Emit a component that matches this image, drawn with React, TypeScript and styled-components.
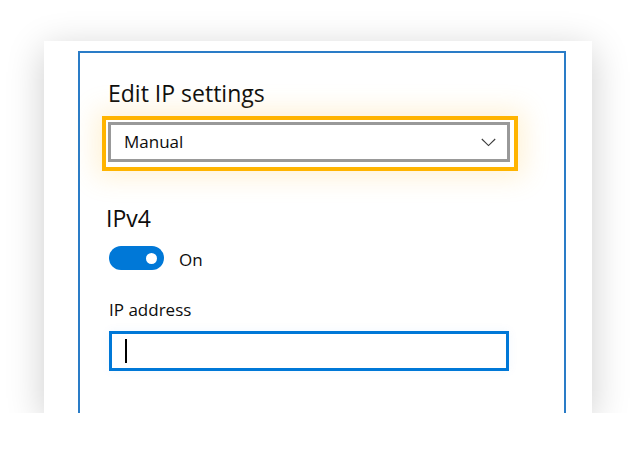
import React from "react";
import styled, { createGlobalStyle } from "styled-components";

const GlobalStyle = createGlobalStyle`
  html, body {
    margin: 0;
    padding: 0;
    background: #ffffff;
  }
  body {
    font-family: "Open Sans", "Noto Sans", "Liberation Sans", sans-serif;
    color: #111;
  }
`;

const Card = styled.div`
  margin: 41px 0 0 44px;
  width: 548px;
  height: 372px;
  background: #ffffff;
  box-shadow: 0 8px 36px rgba(0, 0, 0, 0.2);
  overflow: hidden;
`;

const Frame = styled.div`
  box-sizing: border-box;
  margin: 10px 0 0 34px;
  width: 488px;
  min-height: 420px;
  border: 2px solid #2a7cc7;
  border-bottom: none;
  padding: 25px 0 0 28px;
  display: flex;
  flex-direction: column;
  align-items: flex-start;
`;

const Title = styled.h2<{ $shift?: number }>`
  margin: 0;
  margin-left: ${(p) => p.$shift ?? 0}px;
  font-size: 23px;
  line-height: 30px;
  font-weight: 400;
  color: #0d0d0d;
`;

const Highlight = styled.div`
  box-sizing: border-box;
  margin: 8px 0 0 -6px;
  width: 416px;
  border: 4px solid #ffb400;
  padding: 2px 4px 5px 2px;
  background: #fff;
  box-shadow: 0 0 26px 6px rgba(255, 196, 70, 0.22);
`;

const Select = styled.div`
  box-sizing: border-box;
  height: 40px;
  border: 3px solid #999999;
  display: flex;
  align-items: center;
  justify-content: space-between;
  padding: 0 11px 0 13px;
  font-size: 17px;
  line-height: 20px;
  color: #0d0d0d;
`;

const ToggleRow = styled.div`
  margin-top: 13px;
  display: flex;
  align-items: center;
  gap: 15px;
  margin-left: 1px;
`;

const Track = styled.div<{ $on: boolean }>`
  box-sizing: border-box;
  width: 55px;
  height: 24px;
  border-radius: 12px;
  background: ${(p) => (p.$on ? "#0078d7" : "#ffffff")};
  border: ${(p) => (p.$on ? "none" : "2px solid #333")};
  display: flex;
  align-items: center;
  justify-content: ${(p) => (p.$on ? "flex-end" : "flex-start")};
  padding: 0 7px;
`;

const Knob = styled.span<{ $on: boolean }>`
  width: 11px;
  height: 11px;
  border-radius: 50%;
  background: ${(p) => (p.$on ? "#ffffff" : "#333")};
`;

const ToggleLabel = styled.span`
  font-size: 17px;
  line-height: 20px;
  padding-top: 3px;
  color: #0d0d0d;
`;

const FieldLabel = styled.label<{ $gap: number }>`
  display: block;
  margin: ${(p) => p.$gap}px 0 0 1px;
  font-size: 17px;
  line-height: 20px;
  color: #0d0d0d;
`;

const InputBox = styled.div`
  box-sizing: border-box;
  margin: 11px 0 0 1px;
  width: 400px;
  height: 40px;
  border: 3px solid #0078d7;
  display: flex;
  align-items: center;
  padding-left: 13px;
  box-shadow: 0 0 10px rgba(0, 120, 215, 0.06);
`;

const Caret = styled.span`
  width: 1.5px;
  height: 24px;
  background: #000;
`;

const Chevron = () => (
  <svg width="15" height="9" viewBox="0 0 15 9" fill="none">
    <path d="M0.8 1 L7.5 7.6 L14.2 1" stroke="#3a3a3a" strokeWidth="1.1" />
  </svg>
);

export default function App() {
  return (
    <>
      <GlobalStyle />
      <Card>
        <Frame>
          <Title>Edit IP settings</Title>
          <Highlight>
            <Select>
              <span>Manual</span>
              <Chevron />
            </Select>
          </Highlight>
          <Title as="h3" $shift={-2} style={{ marginTop: 32 }}>
            IPv4
          </Title>
          <ToggleRow>
            <Track $on>
              <Knob $on />
            </Track>
            <ToggleLabel>On</ToggleLabel>
          </ToggleRow>
          <FieldLabel $gap={30}>IP address</FieldLabel>
          <InputBox>
            <Caret />
          </InputBox>
          <FieldLabel $gap={38}>Subnet prefix length</FieldLabel>
        </Frame>
      </Card>
    </>
  );
}
